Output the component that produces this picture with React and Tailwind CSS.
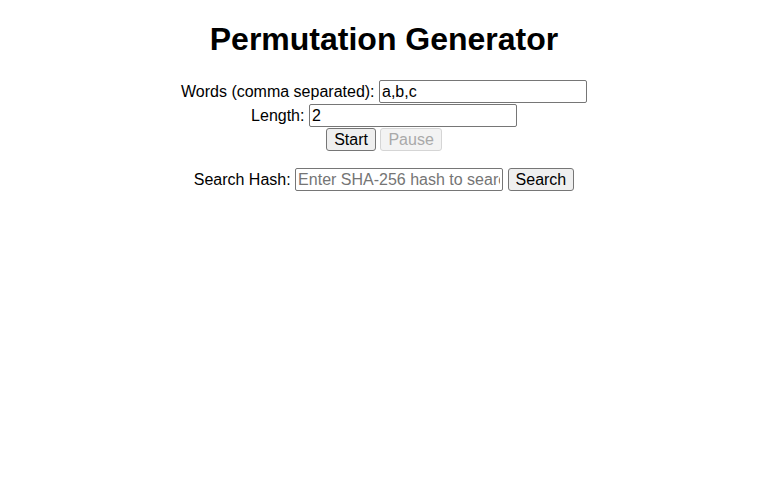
import React, { useState } from 'react';

const inputCls = "w-[208px] border border-[#767676] rounded-[2px] px-[2px] py-[1px] text-base leading-[19px] text-black bg-white placeholder-[#757575] align-top";
const btnCls = "border border-[#767676] rounded-[3px] bg-[#efefef] px-[7px] py-[1px] text-base leading-[19px] text-black align-top";

const App = () => {
  const [words, setWords] = useState('a,b,c');
  const [length, setLength] = useState('2');
  const [hash, setHash] = useState('');

  return (
    <div className="min-h-screen bg-white text-center text-black" style={{ fontFamily: '"Liberation Sans", Arial, sans-serif' }}>
      <h1 className="pt-[21px] pb-[22px] text-[32px] leading-[37px] font-bold">Permutation Generator</h1>

      {/* form */}
      <div className="leading-[23px]">
        <div className="h-[24px]">
          <label>Words (comma separated): </label>
          <input className={inputCls} value={words} onChange={(e) => setWords(e.target.value)} />
        </div>
        <div className="h-[24px]">
          <label>Length: </label>
          <input className={inputCls} value={length} onChange={(e) => setLength(e.target.value)} />
        </div>
        <div className="h-[24px]">
          <button className={btnCls}>Start</button>{' '}
          <button disabled className="border border-[#d5d5d5] rounded-[3px] bg-[#f3f3f3] px-[7px] py-[1px] text-base leading-[19px] text-[#a9a9a9] align-top">Pause</button>
        </div>
      </div>

      {/* search */}
      <div className="mt-4 h-[24px] leading-[23px]">
        <label>Search Hash: </label>
        <input className={inputCls} placeholder="Enter SHA-256 hash to search" value={hash} onChange={(e) => setHash(e.target.value)} />{' '}
        <button className={btnCls}>Search</button>
      </div>
    </div>
  );
};

export default App;
